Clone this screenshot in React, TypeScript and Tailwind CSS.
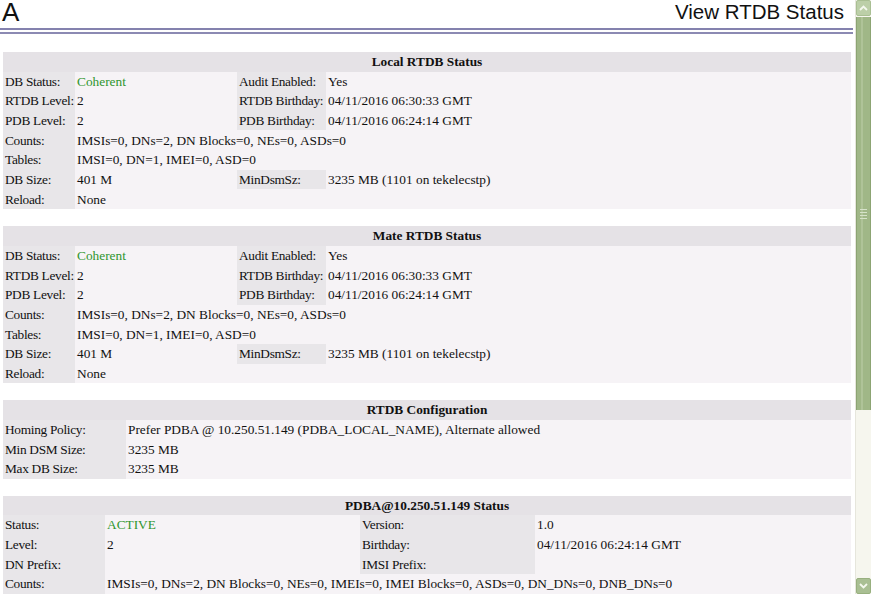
import React from 'react';

type CellDef = {
    text?: string;
    kind: 'label' | 'value';
    span?: 1 | 3;
    green?: boolean;
};

type TableDef = {
    title: string;
    cols: string;
    rows: CellDef[][];
};

const L = (text: string): CellDef => ({ text, kind: 'label' });
const V = (text = '', green = false): CellDef => ({ text, kind: 'value', green });
const W = (text: string): CellDef => ({ text, kind: 'value', span: 3 });

const rtdbRows: CellDef[][] = [
    [L('DB Status:'), V('Coherent', true), L('Audit Enabled:'), V('Yes')],
    [L('RTDB Level:'), V('2'), L('RTDB Birthday:'), V('04/11/2016 06:30:33 GMT')],
    [L('PDB Level:'), V('2'), L('PDB Birthday:'), V('04/11/2016 06:24:14 GMT')],
    [L('Counts:'), W('IMSIs=0, DNs=2, DN Blocks=0, NEs=0, ASDs=0')],
    [L('Tables:'), W('IMSI=0, DN=1, IMEI=0, ASD=0')],
    [L('DB Size:'), V('401 M'), L('MinDsmSz:'), V('3235 MB (1101 on tekelecstp)')],
    [L('Reload:'), W('None')],
];

const TABLES: TableDef[] = [
    { title: 'Local RTDB Status', cols: 'grid-cols-[72px_162px_89px_1fr]', rows: rtdbRows },
    { title: 'Mate RTDB Status', cols: 'grid-cols-[72px_162px_89px_1fr]', rows: rtdbRows },
    {
        title: 'RTDB Configuration',
        cols: 'grid-cols-[123px_1fr]',
        rows: [
            [L('Homing Policy:'), V('Prefer PDBA @ 10.250.51.149 (PDBA_LOCAL_NAME), Alternate allowed')],
            [L('Min DSM Size:'), V('3235 MB')],
            [L('Max DB Size:'), V('3235 MB')],
        ],
    },
    {
        title: 'PDBA@10.250.51.149 Status',
        cols: 'grid-cols-[102px_255px_175px_1fr]',
        rows: [
            [L('Status:'), V('ACTIVE', true), L('Version:'), V('1.0')],
            [L('Level:'), V('2'), L('Birthday:'), V('04/11/2016 06:24:14 GMT')],
            [L('DN Prefix:'), V(''), L('IMSI Prefix:'), V('')],
            [L('Counts:'), W('IMSIs=0, DNs=2, DN Blocks=0, NEs=0, IMEIs=0, IMEI Blocks=0, ASDs=0, DN_DNs=0, DNB_DNs=0')],
            [L(''), V(''), L(''), V('')],
        ],
    },
];

const Cell: React.FC<{ cell: CellDef }> = ({ cell }) => (
    <div
        className={`h-[19.67px] flex items-center pl-[2px] whitespace-nowrap ${cell.kind === 'label' ? 'bg-[#e8e6e9] tracking-[-0.3px]' : 'bg-[#f6f3f6]'} ${cell.span === 3 ? 'col-span-3' : ''} ${cell.green ? 'text-[#2f962f]' : 'text-[#111]'}`}
    >
        {cell.text}
    </div>
);

const StatusTable: React.FC<{ table: TableDef }> = ({ table }) => (
    <div className="w-[848px] mb-[17px]">
        <div className="h-[19.5px] flex items-center justify-center bg-[#e5e2e6] font-bold text-[#111]">
            {table.title}
        </div>
        <div className={`grid ${table.cols}`}>
            {table.rows.map((row, i) => (
                <React.Fragment key={i}>
                    {row.map((cell, j) => (
                        <Cell key={j} cell={cell} />
                    ))}
                </React.Fragment>
            ))}
        </div>
    </div>
);

const ScrollBar: React.FC = () => (
    <div className="w-[16px] h-full flex flex-col bg-[#f6f6ee] border-l border-[#e6e6dc]">
        {/* up button */}
        <div className="h-[16px] flex items-center justify-center bg-[#bccfa8] border border-[#a9bf93] rounded-[2px]">
            <svg width="9" height="6" viewBox="0 0 9 6">
                <path d="M1 5 L4.5 1.5 L8 5" fill="none" stroke="#f4f8ee" strokeWidth="1.8" />
            </svg>
        </div>
        {/* thumb */}
        <div className="h-[393px] mt-[1px] flex items-center justify-center bg-[#a0b787] border-x border-[#8ca473] relative">
            <div className="absolute inset-y-0 left-[4px] w-[2px] bg-[#afc398]" />
            <div className="flex flex-col gap-[2px] relative">
                <div className="w-[7px] h-[1px] bg-[#d6e2c9]" />
                <div className="w-[7px] h-[1px] bg-[#d6e2c9]" />
                <div className="w-[7px] h-[1px] bg-[#d6e2c9]" />
                <div className="w-[7px] h-[1px] bg-[#d6e2c9]" />
            </div>
        </div>
        <div className="flex-1" />
        {/* down button */}
        <div className="h-[16px] flex items-center justify-center bg-[#a9bf93] border border-[#98b07f] rounded-[2px]">
            <svg width="9" height="6" viewBox="0 0 9 6">
                <path d="M1 1 L4.5 4.5 L8 1" fill="none" stroke="#f4f8ee" strokeWidth="1.8" />
            </svg>
        </div>
    </div>
);

export default function App() {
    return (
        <div className="w-[871px] h-[594px] flex bg-white overflow-hidden">
            <div className="w-[855px] h-full overflow-hidden">
                {/* Page header */}
                <div className="h-[28px] flex items-start justify-between pl-[2px] pr-[11px] text-[#111] font-['Liberation_Sans',Arial,sans-serif]">
                    <span className="text-[26px] leading-[25px]">A</span>
                    <span className="text-[20.5px] leading-[23px]">View RTDB Status</span>
                </div>
                <div className="w-[853px] h-[2px] bg-[#8482ae]" />
                <div className="w-[853px] h-[2px] mt-[2px] bg-[#8c8ab3]" />

                {/* Status tables */}
                <div className="pt-[18px] pl-[3px] text-[13.333px] leading-[15px] font-['Liberation_Serif','Times_New_Roman',serif]">
                    {TABLES.map((t) => (
                        <StatusTable key={t.title} table={t} />
                    ))}
                </div>
            </div>
            <ScrollBar />
        </div>
    );
}
